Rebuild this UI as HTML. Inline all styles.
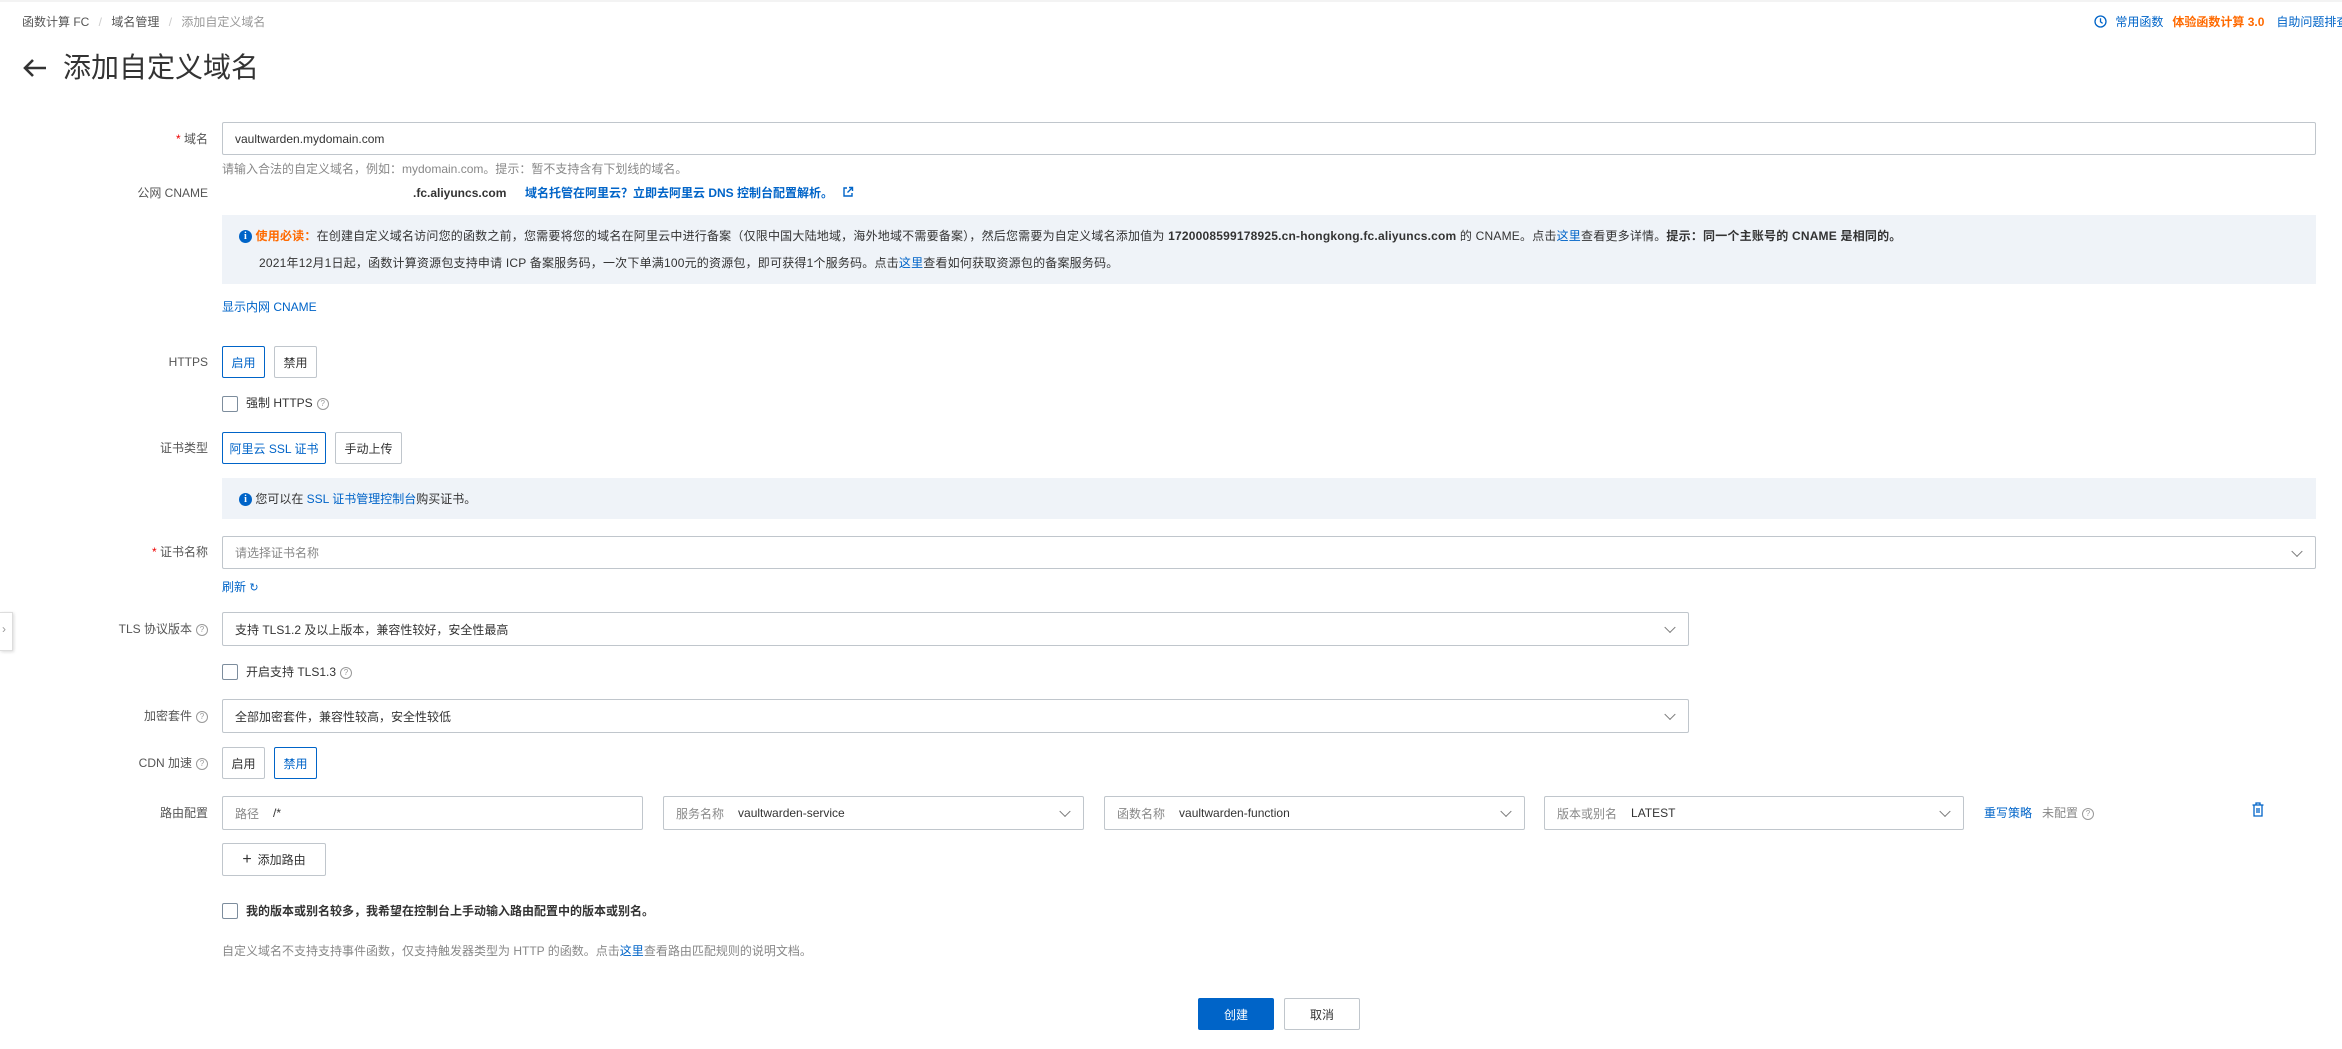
<!DOCTYPE html>
<html><head><meta charset="utf-8"><style>
html,body{margin:0;padding:0;width:2342px;height:1049px;overflow:hidden;background:#fff;}
body{position:relative;font-family:"Liberation Sans","Noto Sans CJK SC",sans-serif;font-size:12px;color:#333;}
.a{position:absolute;white-space:nowrap;}
.lbl{position:absolute;right:2134px;white-space:nowrap;color:#555;font-size:12px;line-height:16px;}
.blue{color:#0064c8;}
.inp{position:absolute;box-sizing:border-box;border:1px solid #c0c6cc;background:#fff;border-radius:2px;padding-left:12px;font-size:12px;color:#333;display:flex;align-items:center;}
.btn{position:absolute;box-sizing:border-box;border:1px solid #c0c6cc;background:#fff;border-radius:2px;display:flex;align-items:center;justify-content:center;font-size:12px;color:#333;}
.sel{border-color:#0064c8;color:#0064c8;}
.cb{position:absolute;box-sizing:border-box;width:16px;height:16px;border:1px solid #7d8d9d;border-radius:2px;background:#fff;}
.q{display:inline-block;box-sizing:border-box;width:12px;height:12px;border:1px solid #999;border-radius:50%;font-size:8px;line-height:10px;text-align:center;color:#999;vertical-align:middle;margin-left:4px;}
.arr{position:absolute;right:14px;top:50%;width:7px;height:7px;border-right:1.3px solid #777;border-bottom:1.3px solid #777;transform:translateY(-70%) rotate(45deg);}
.info{display:inline-block;width:13px;height:13px;border-radius:50%;background:#0064c8;color:#fff;font-size:10px;font-weight:bold;text-align:center;line-height:13px;vertical-align:middle;font-family:"Liberation Serif",serif;}
.k{color:#888;margin-right:14px;}
</style></head><body>
<div style="position:absolute;left:0;top:0;width:2342px;height:2px;background:#f3f3f3"></div>
<div class="a" style="left:22px;top:14px;line-height:16px;color:#555">函数计算 FC <span style="color:#ccc;margin:0 6px">/</span> 域名管理 <span style="color:#ccc;margin:0 6px">/</span> <span style="color:#999">添加自定义域名</span></div>
<div class="a" style="left:2094px;top:14px;line-height:16px">
<svg width="13" height="13" viewBox="0 0 13 13" style="vertical-align:-2px"><circle cx="6.5" cy="6.5" r="5.5" fill="none" stroke="#0064c8" stroke-width="1.3"/><path d="M6.5 3.3V6.8L8.6 8.4" fill="none" stroke="#0064c8" stroke-width="1.3"/></svg>
<span class="blue" style="margin-left:5px">常用函数</span><span style="color:#ff6a00;font-weight:bold;margin-left:9px">体验函数计算 3.0</span><span class="blue" style="margin-left:12px">自助问题排查</span></div>

<svg class="a" style="left:22px;top:58px" width="26" height="20" viewBox="0 0 26 20"><path d="M24 10H3M11 2L3 10L11 18" fill="none" stroke="#333" stroke-width="2.6"/></svg>
<div class="a" style="left:63px;top:50px;font-size:28px;line-height:36px;color:#333">添加自定义域名</div>

<div class="lbl" style="top:131px"><span style="color:#e00">*</span> 域名</div>
<div class="inp" style="left:222px;top:122px;width:2094px;height:33px">vaultwarden.mydomain.com</div>
<div class="a" style="left:222px;top:161px;color:#888;line-height:16px">请输入合法的自定义域名，例如：mydomain.com。提示：暂不支持含有下划线的域名。</div>
<div class="lbl" style="top:185px">公网 CNAME</div>
<div class="a" style="left:413px;top:185px;line-height:16px;font-weight:bold;color:#333">.fc.aliyuncs.com</div>
<div class="a blue" style="left:525px;top:185px;line-height:16px;font-weight:bold">域名托管在阿里云？立即去阿里云 DNS 控制台配置解析。
<svg width="12" height="12" viewBox="0 0 12 12" style="vertical-align:-1px;margin-left:6px"><path d="M5 2H2v8h8V7M7 1.5h3.5V5M10.5 1.5L5.5 6.5" fill="none" stroke="#0064c8" stroke-width="1.4"/></svg></div>

<div style="position:absolute;left:222px;top:215px;width:2094px;height:69px;background:#eff3f8"></div>
<div class="a" style="left:239px;top:228px;line-height:16px;letter-spacing:0.2px"><span class="info">i</span> <span style="color:#ff6a00;font-weight:bold">使用必读：</span>在创建自定义域名访问您的函数之前，您需要将您的域名在阿里云中进行备案（仅限中国大陆地域，海外地域不需要备案），然后您需要为自定义域名添加值为 <b>1720008599178925.cn-hongkong.fc.aliyuncs.com</b> 的 CNAME。点击<span class="blue">这里</span>查看更多详情。<b>提示：同一个主账号的 CNAME 是相同的。</b></div>
<div class="a" style="left:259px;top:255px;line-height:16px;letter-spacing:0.2px">2021年12月1日起，函数计算资源包支持申请 ICP 备案服务码，一次下单满100元的资源包，即可获得1个服务码。点击<span class="blue">这里</span>查看如何获取资源包的备案服务码。</div>
<div class="a blue" style="left:222px;top:299px;line-height:16px">显示内网 CNAME</div>

<div class="lbl" style="top:354px">HTTPS</div>
<div class="btn sel" style="left:222px;top:346px;width:43px;height:32px">启用</div>
<div class="btn" style="left:274px;top:346px;width:43px;height:32px">禁用</div>
<div class="cb" style="left:222px;top:396px"></div>
<div class="a" style="left:246px;top:395px;line-height:16px">强制 HTTPS<span class="q">?</span></div>

<div class="lbl" style="top:440px">证书类型</div>
<div class="btn sel" style="left:222px;top:432px;width:104px;height:32px">阿里云 SSL 证书</div>
<div class="btn" style="left:335px;top:432px;width:67px;height:32px">手动上传</div>
<div style="position:absolute;left:222px;top:478px;width:2094px;height:41px;background:#eff3f8"></div>
<div class="a" style="left:239px;top:491px;line-height:16px"><span class="info">i</span> 您可以在 <span class="blue">SSL 证书管理控制台</span>购买证书。</div>

<div class="lbl" style="top:544px"><span style="color:#e00">*</span> 证书名称</div>
<div class="inp" style="left:222px;top:536px;width:2094px;height:33px;color:#888">请选择证书名称<span class="arr"></span></div>
<div class="a blue" style="left:222px;top:579px;line-height:16px">刷新 <span style="font-size:11px">↻</span></div>

<div class="lbl" style="top:621px">TLS 协议版本<span class="q">?</span></div>
<div class="inp" style="left:222px;top:612px;width:1467px;height:34px">支持 TLS1.2 及以上版本，兼容性较好，安全性最高<span class="arr"></span></div>
<div class="cb" style="left:222px;top:664px"></div>
<div class="a" style="left:246px;top:664px;line-height:16px">开启支持 TLS1.3<span class="q">?</span></div>

<div class="lbl" style="top:708px">加密套件<span class="q">?</span></div>
<div class="inp" style="left:222px;top:699px;width:1467px;height:34px">全部加密套件，兼容性较高，安全性较低<span class="arr"></span></div>

<div class="lbl" style="top:755px">CDN 加速<span class="q">?</span></div>
<div class="btn" style="left:222px;top:747px;width:43px;height:32px">启用</div>
<div class="btn sel" style="left:274px;top:747px;width:43px;height:32px">禁用</div>

<div class="lbl" style="top:805px">路由配置</div>
<div class="inp" style="left:222px;top:796px;width:421px;height:34px"><span class="k">路径</span>/*</div>
<div class="inp" style="left:663px;top:796px;width:421px;height:34px"><span class="k">服务名称</span>vaultwarden-service<span class="arr"></span></div>
<div class="inp" style="left:1104px;top:796px;width:421px;height:34px"><span class="k">函数名称</span>vaultwarden-function<span class="arr"></span></div>
<div class="inp" style="left:1544px;top:796px;width:420px;height:34px"><span class="k">版本或别名</span>LATEST<span class="arr"></span></div>
<div class="a" style="left:1984px;top:805px;line-height:16px"><span class="blue">重写策略</span><span style="color:#888;margin-left:10px">未配置</span><span class="q">?</span></div>
<svg class="a" style="left:2252px;top:802px" width="12" height="15" viewBox="0 0 12 15"><path d="M0.5 3H11.5M4 3V1H8V3M2 3V14H10V3M5 6V11M7 6V11" fill="none" stroke="#0064c8" stroke-width="1.3"/></svg>

<div class="btn" style="left:222px;top:843px;width:104px;height:33px"><span style="font-size:16px;margin-right:6px">+</span>添加路由</div>
<div class="cb" style="left:222px;top:903px"></div>
<div class="a" style="left:246px;top:903px;line-height:16px;font-weight:bold">我的版本或别名较多，我希望在控制台上手动输入路由配置中的版本或别名。</div>
<div class="a" style="left:222px;top:943px;line-height:16px;color:#888">自定义域名不支持支持事件函数，仅支持触发器类型为 HTTP 的函数。点击<span class="blue">这里</span>查看路由匹配规则的说明文档。</div>

<div class="btn" style="left:1198px;top:998px;width:76px;height:32px;background:#0064c8;border-color:#0064c8;color:#fff">创建</div>
<div class="btn" style="left:1284px;top:998px;width:76px;height:32px">取消</div>

<div style="position:absolute;left:0;top:612px;width:13px;height:39px;box-sizing:border-box;border:1px solid #ddd;border-left:none;background:#fff;box-shadow:1px 1px 3px rgba(0,0,0,.15)"></div>
<div class="a" style="left:2px;top:622px;color:#999;font-size:12px">›</div>
</body></html>
